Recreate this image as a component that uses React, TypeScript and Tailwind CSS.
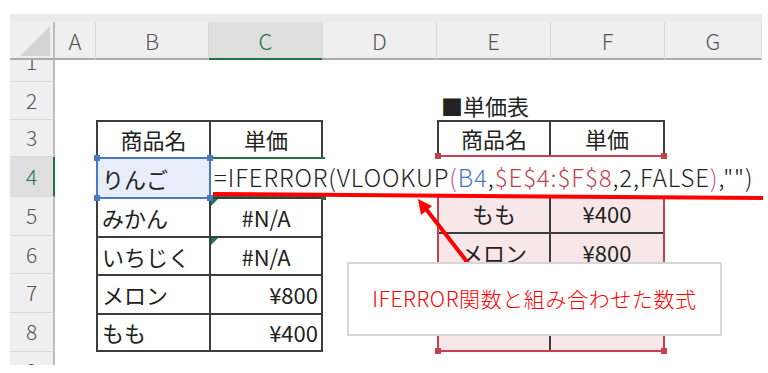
import React from "react";

const font = "font-['Noto_Sans_CJK_JP','Noto_Sans',sans-serif]";

const letters = ["A", "B", "C", "D", "E", "F", "G"];

function ColHeader({ label }: { label: string }) {
  const active = label === "C";
  return (
    <div
      className={
        active
          ? "row-start-2 flex items-center justify-center border-b-2 border-r border-b-[#217346] border-r-[#d9d9d9] bg-[#dedede] text-[22px] font-light text-[#217346]"
          : "row-start-2 flex items-center justify-center border-b-2 border-r border-b-[#ababab] border-r-[#d9d9d9] bg-[#efefef] text-[22px] font-light text-[#555]"
      }
    >
      {label}
    </div>
  );
}

function RowHeader({ n, row }: { n: string; row: string }) {
  const active = n === "4";
  if (n === "1") {
    return (
      <div className={`${row} col-start-1 flex items-end overflow-hidden border-b border-r-2 border-b-[#d9d9d9] border-r-[#bdbdbd] bg-[#efefef]`}>
        <div className="flex h-[38px] w-full shrink-0 items-center justify-center text-[21px] font-light text-[#555]">1</div>
      </div>
    );
  }
  if (n === "9") {
    return (
      <div className={`${row} col-start-1 flex items-start overflow-hidden border-r-2 border-r-[#bdbdbd] bg-[#efefef]`}>
        <div className="flex h-[38px] w-full shrink-0 items-center justify-center text-[21px] font-light text-[#555]">9</div>
      </div>
    );
  }
  return (
    <div
      className={
        active
          ? `${row} col-start-1 flex items-center justify-center border-b border-r-2 border-b-[#d9d9d9] border-r-[#217346] bg-[#dedede] text-[21px] font-light text-[#217346]`
          : `${row} col-start-1 flex items-center justify-center border-b border-r-2 border-b-[#d9d9d9] border-r-[#bdbdbd] bg-[#efefef] text-[21px] font-light text-[#555]`
      }
    >
      {n}
    </div>
  );
}

function Handle({ pos, color }: { pos: string; color: string }) {
  return <span className={`absolute z-20 h-[6px] w-[6px] ${pos} ${color}`} />;
}

function ErrorMark() {
  return (
    <span className="absolute left-0 top-0 h-0 w-0 border-r-[7px] border-t-[7px] border-r-transparent border-t-[#1e7b3c]" />
  );
}

export default function App() {
  return (
    <div className={`relative h-[373px] w-[768px] overflow-hidden bg-white pl-[10px] pt-[14px] ${font}`}>
      <div className="grid w-[752px] grid-cols-[45px_41px_113px_114px_114px_114px_114px_97px] grid-rows-[8px_38px_22px_38px_37px_40px_39px_38px_39px_39px_13px]">
        <div className="col-start-1 col-end-9 row-start-1 bg-[#e8ecef]" />

        <div className="relative col-start-1 row-start-2 border-b-2 border-r-2 border-b-[#ababab] border-r-[#bdbdbd] bg-[#efefef]">
          <svg className="absolute bottom-[2px] right-[3px]" width="30" height="30" viewBox="0 0 30 30">
            <polygon points="0,30 30,30 30,0" fill="#d4d4d4" />
          </svg>
        </div>
        {letters.map((l) => (
          <ColHeader key={l} label={l} />
        ))}

        <RowHeader n="1" row="row-start-3" />
        <RowHeader n="2" row="row-start-4" />
        <RowHeader n="3" row="row-start-5" />
        <RowHeader n="4" row="row-start-6" />
        <RowHeader n="5" row="row-start-7" />
        <RowHeader n="6" row="row-start-8" />
        <RowHeader n="7" row="row-start-9" />
        <RowHeader n="8" row="row-start-10" />
        <RowHeader n="9" row="row-start-11" />

        {/* title */}
        <div className="col-start-6 col-end-8 row-start-4 flex items-end pb-[4px] pl-[4px] text-[22px] leading-none text-[#222]">
          ■単価表
        </div>

        {/* left table B3:C8 */}
        <div className="col-start-3 col-end-5 row-start-5 row-end-11 grid grid-cols-[111px_1fr] grid-rows-[35px_38px_37px_36px_37px_1fr] gap-[2px] bg-[#3d3d3d] p-[2px] text-[22px] text-[#222]">
          <div className="flex items-center justify-center bg-white">商品名</div>
          <div className="flex items-center justify-center bg-white">単価</div>
          <div className="relative flex items-center bg-[#e8eef9] pl-[4px]">
            りんご
            <div className="pointer-events-none absolute -inset-[2px] border-2 border-[#4a78c9]" />
            <Handle pos="-left-[4px] -top-[4px]" color="bg-[#4a78c9]" />
            <Handle pos="-right-[4px] -top-[4px]" color="bg-[#4a78c9]" />
            <Handle pos="-left-[4px] -bottom-[4px]" color="bg-[#4a78c9]" />
            <Handle pos="-right-[4px] -bottom-[4px]" color="bg-[#4a78c9]" />
          </div>
          <div className="bg-white" />
          <div className="flex items-center bg-white pl-[4px]">みかん</div>
          <div className="relative flex items-center justify-center bg-white">
            <ErrorMark />
            #N/A
          </div>
          <div className="flex items-center bg-white pl-[4px]">いちじく</div>
          <div className="relative flex items-center justify-center bg-white">
            <ErrorMark />
            #N/A
          </div>
          <div className="flex items-center bg-white pl-[4px]">メロン</div>
          <div className="flex items-center justify-end bg-white pr-[3px]">¥800</div>
          <div className="flex items-center bg-white pl-[4px]">もも</div>
          <div className="flex items-center justify-end bg-white pr-[3px]">¥400</div>
        </div>

        {/* right table E3:F8 */}
        <div className="col-start-6 col-end-8 row-start-5 row-end-11 flex flex-col text-[22px] text-[#222]">
          <div className="grid h-[37px] shrink-0 grid-cols-[112px_1fr] border-x-2 border-b-2 border-t-2 border-[#3d3d3d] border-b-[#c7404e]">
            <div className="flex items-center justify-center border-r-2 border-[#3d3d3d]">商品名</div>
            <div className="flex items-center justify-center">単価</div>
          </div>
          <div className="relative grid flex-1 grid-cols-[112px_1fr] grid-rows-[38px_39px_38px_39px_1fr] border-x-2 border-b-2 border-[#c7404e] bg-[#f8e7e9]">
            <div className="border-b-2 border-r-2 border-[#3d3d3d]" />
            <div className="border-b-2 border-[#3d3d3d]" />
            <div className="flex items-center justify-center border-b-2 border-r-2 border-[#3d3d3d]">もも</div>
            <div className="flex items-center justify-center border-b-2 border-[#3d3d3d]">¥400</div>
            <div className="flex items-center justify-center border-b-2 border-r-2 border-[#3d3d3d]">メロン</div>
            <div className="flex items-center justify-center border-b-2 border-[#3d3d3d]">¥800</div>
            <div className="border-b-2 border-r-2 border-[#3d3d3d]" />
            <div className="border-b-2 border-[#3d3d3d]" />
            <div className="border-r-2 border-[#3d3d3d]" />
            <div />
            <Handle pos="-left-[4px] -top-[4px]" color="bg-[#c7404e]" />
            <Handle pos="-right-[4px] -top-[4px]" color="bg-[#c7404e]" />
            <Handle pos="-left-[4px] -bottom-[4px]" color="bg-[#c7404e]" />
            <Handle pos="-right-[4px] -bottom-[4px]" color="bg-[#c7404e]" />
          </div>
        </div>

        {/* cell editor C4 with overflowing formula */}
        <div className="relative z-10 col-start-4 col-end-9 row-start-6 ml-[2px] flex items-center bg-white pl-[3px] text-[24px] font-light tracking-[0.9px] text-[#222]">
          <div className="absolute left-[2px] top-0 h-full w-[112px] border-y-2 border-[#217346]" />
          <span className="absolute -bottom-[3px] left-[110px] h-[5px] w-[5px] bg-[#217346]" />
          <span className="whitespace-nowrap">
            =IFERROR(VLOOKUP<span className="text-[#c9559f]">(</span>
            <span className="text-[#4a78c9]">B4</span>,
            <span className="text-[#c7404e]">$E$4:$F$8</span>,2,FALSE
            <span className="text-[#c9559f]">)</span>,"")
          </span>
        </div>
      </div>

      {/* annotation line and arrow */}
      <svg className="pointer-events-none absolute left-0 top-0 z-20" width="768" height="373" viewBox="0 0 768 373">
        <line x1="213" y1="194" x2="763" y2="198" stroke="#ff0000" strokeWidth="4" />
        <line x1="468" y1="263" x2="426" y2="209" stroke="#ff0000" strokeWidth="4" />
        <polygon points="418,199 432,206 421,215" fill="#ff0000" />
      </svg>

      <div className="absolute left-[347px] top-[262px] z-30 flex h-[74px] w-[375px] items-center justify-center border-2 border-[#d6d6d6] bg-white text-[21px] font-light tracking-[0.6px] text-[#ff0000]">
        IFERROR関数と組み合わせた数式
      </div>
    </div>
  );
}
